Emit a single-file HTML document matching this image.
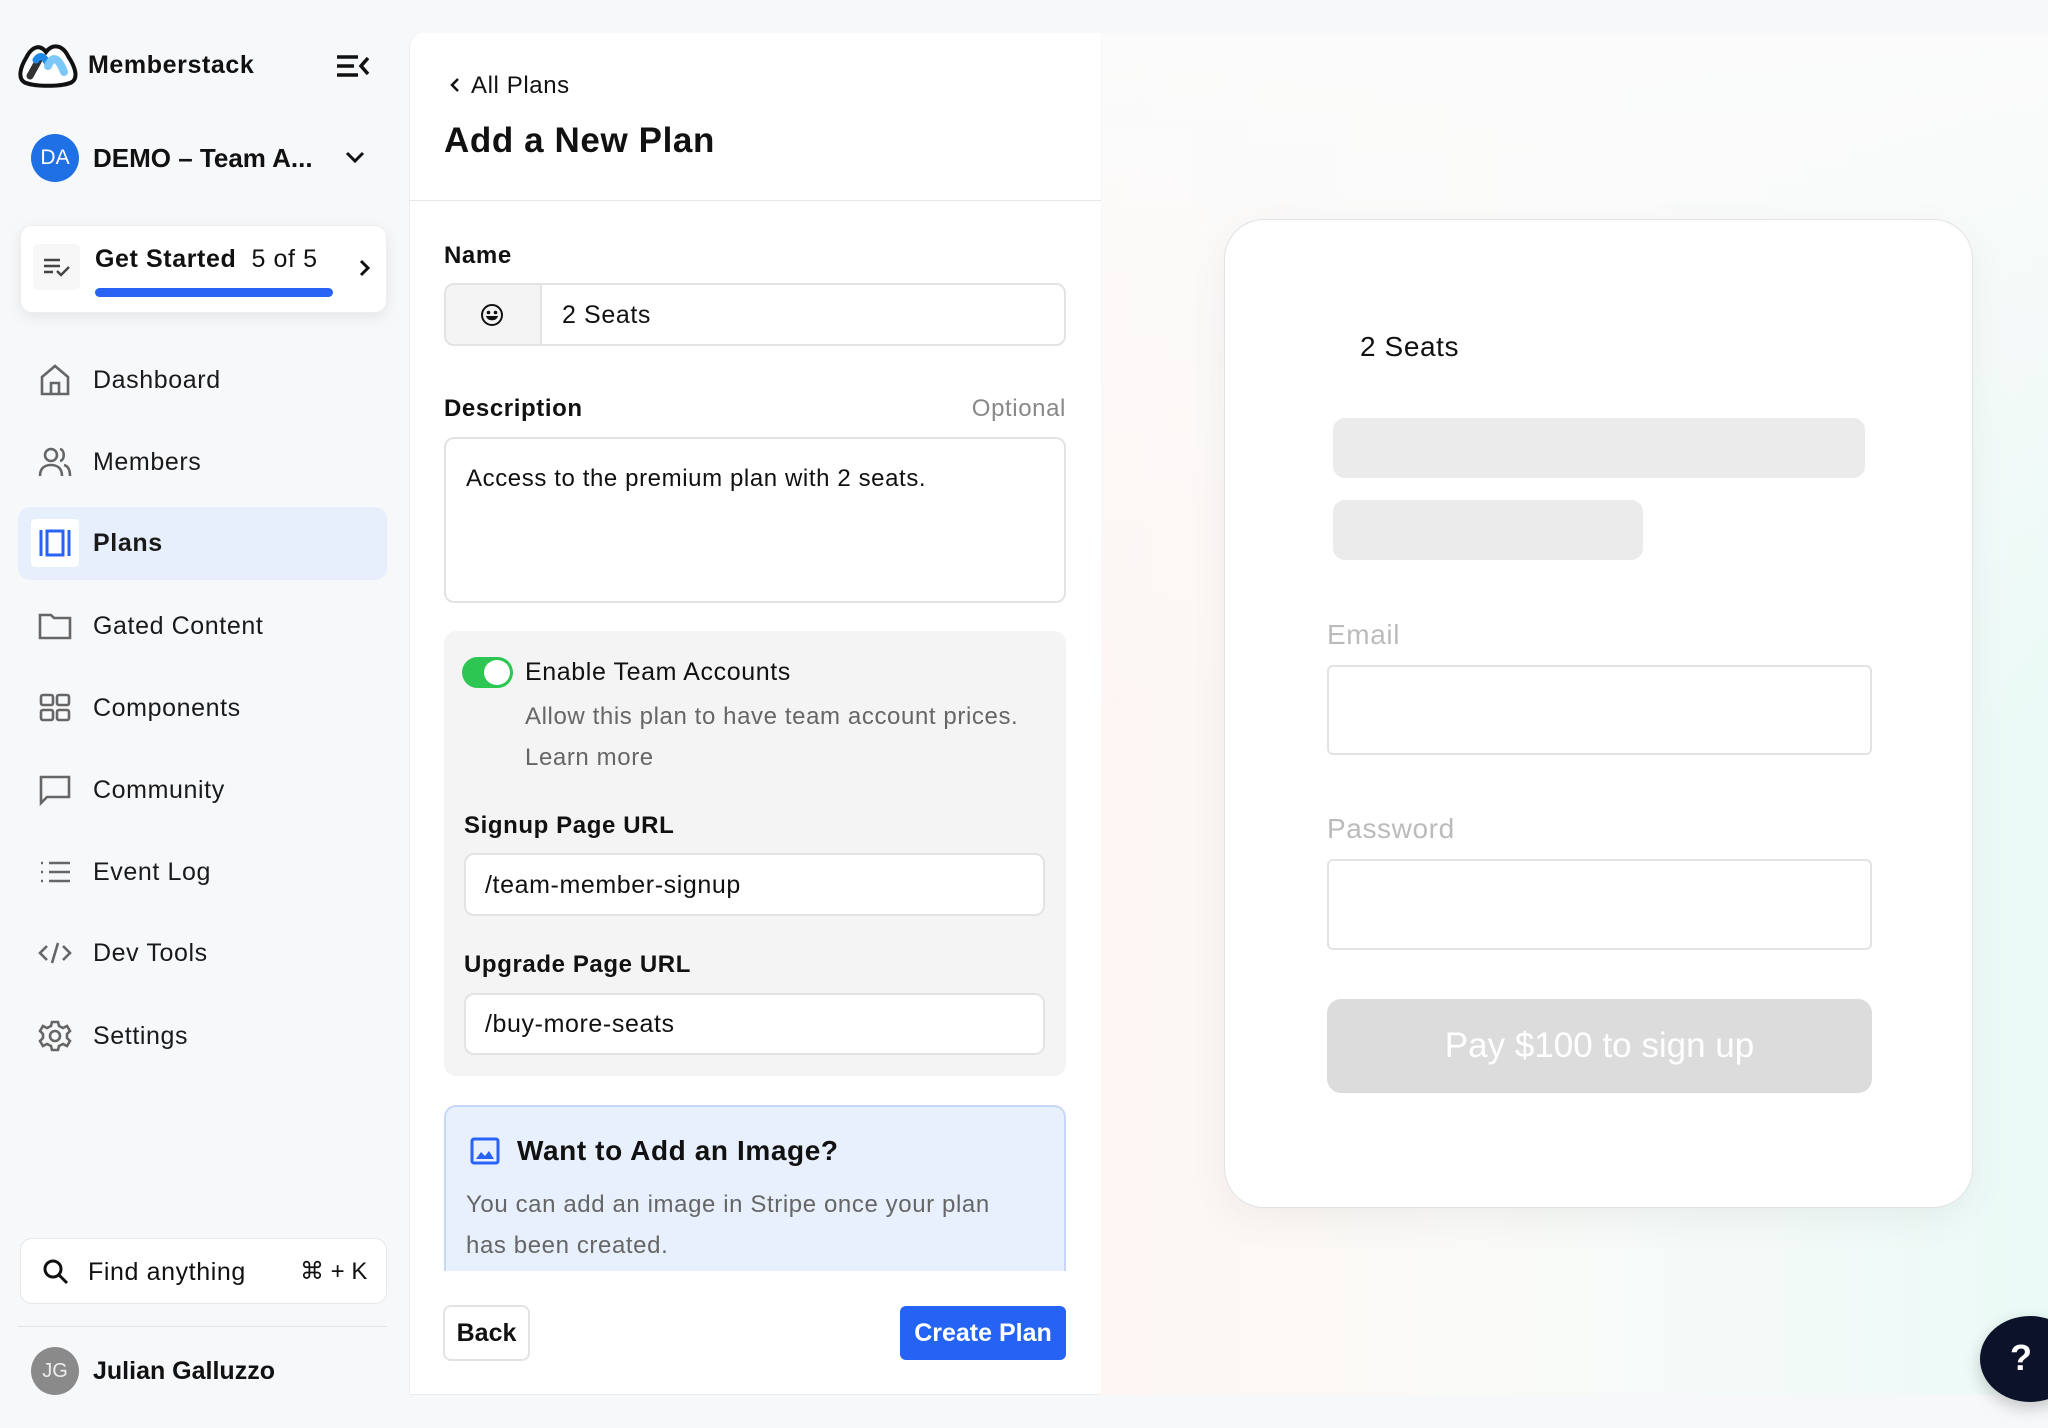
<!DOCTYPE html>
<html><head><meta charset="utf-8"><style>
*{margin:0;padding:0;box-sizing:border-box}
body{width:2048px;height:1428px;overflow:hidden;background:#f7f8fa;font-family:"Liberation Sans",sans-serif;color:#111;position:relative;letter-spacing:0.6px}
.a{position:absolute}
.t{position:absolute;white-space:nowrap;line-height:40px;height:40px}
.nav{font-size:25px;color:#1a1a1a}
.ic{position:absolute;left:37px;width:36px;height:36px}
.lab{font-size:24px;font-weight:bold}
.inp{position:absolute;background:#fff;border:2px solid #e3e3e3;border-radius:10px}
</style></head><body>

<!-- sidebar -->
<svg class="a" style="left:18px;top:42px" width="60" height="46" viewBox="0 0 60 46">
<path d="M6 40 C0 36 2 26 8 16 C14 4 22 2 28 10 C34 2 44 2 50 14 C58 26 60 36 54 40 C46 45 14 45 6 40Z" fill="#fff" stroke="#111" stroke-width="4"/>
<path d="M12 34 L22 16" stroke="#333" stroke-width="7" stroke-linecap="round"/>
<path d="M18 18 C22 12 26 14 30 22" stroke="#1e88e5" stroke-width="7" fill="none" stroke-linecap="round"/>
<path d="M30 24 C34 14 40 14 46 30" stroke="#7cc8f8" stroke-width="8" fill="none" stroke-linecap="round"/>
</svg>
<div class="t" style="left:88px;top:45px;font-size:25px;font-weight:bold">Memberstack</div>
<svg class="a" style="left:336px;top:54px" width="34" height="24" viewBox="0 0 34 24"><path d="M1 3H22M1 12H18M1 21H22M32 4L25 12L32 20" stroke="#111" stroke-width="3.5" fill="none"/></svg>

<div class="a" style="left:31px;top:134px;width:48px;height:48px;border-radius:50%;background:#1f6fe5;color:#fff;font-size:21px;line-height:48px;text-align:center;letter-spacing:0">DA</div>
<div class="t" style="left:93px;top:138px;font-size:26px;font-weight:bold;letter-spacing:0">DEMO – Team A...</div>
<svg class="a" style="left:345px;top:150px" width="20" height="14" viewBox="0 0 20 14"><path d="M2 3L10 11L18 3" stroke="#111" stroke-width="3" fill="none"/></svg>

<div class="a" style="left:20px;top:225px;width:367px;height:88px;background:#fff;border-radius:12px;box-shadow:0 4px 14px rgba(0,0,0,.08);border:1px solid #eee"></div>
<div class="a" style="left:33px;top:244px;width:47px;height:46px;background:#f7f7f7;border-radius:6px"></div>
<svg class="a" style="left:43px;top:257px" width="30" height="20" viewBox="0 0 30 20"><path d="M1 3H17M1 9H17M1 15H10M14 14L18 18L26 10" stroke="#444" stroke-width="2.4" fill="none"/></svg>
<div class="t" style="left:95px;top:239px;font-size:25px"><b>Get Started</b>&nbsp; 5 of 5</div>
<div class="a" style="left:95px;top:288px;width:238px;height:9px;border-radius:5px;background:#2963f5"></div>
<svg class="a" style="left:358px;top:258px" width="14" height="20" viewBox="0 0 14 20"><path d="M3 3L10 10L3 17" stroke="#111" stroke-width="3" fill="none"/></svg>

<div class="a" style="left:18px;top:507px;width:369px;height:73px;background:#e7effd;border-radius:12px"></div>
<div class="a" style="left:31px;top:519px;width:48px;height:48px;background:#fff;border-radius:4px"></div>
<svg class="a" style="left:38px;top:529px" width="34" height="28" viewBox="0 0 34 28"><path d="M3 1V27M31 1V27" stroke="#2963f5" stroke-width="3"/><rect x="9" y="2" width="16" height="24" fill="none" stroke="#2963f5" stroke-width="3"/></svg>

<svg class="ic" style="top:362px" viewBox="0 0 36 36" fill="none" stroke="#666" stroke-width="2.6"><path d="M5 15L18 4L31 15V32H5Z M14 32V21H22V32"/></svg>
<div class="t nav" style="left:93px;top:360px">Dashboard</div>
<svg class="ic" style="top:444px" viewBox="0 0 36 36" fill="none" stroke="#666" stroke-width="2.6"><circle cx="14" cy="11" r="6"/><path d="M3 32C3 24 8 21 14 21C20 21 25 24 25 32M23 5C28 6 28 16 23 17M27 21C31 22 33 26 33 32"/></svg>
<div class="t nav" style="left:93px;top:442px">Members</div>
<div class="t nav" style="left:93px;top:523px;font-weight:bold">Plans</div>
<svg class="ic" style="top:608px" viewBox="0 0 36 36" fill="none" stroke="#666" stroke-width="2.6"><path d="M3 7H14L17 10H33V30H3Z"/></svg>
<div class="t nav" style="left:93px;top:606px">Gated Content</div>
<svg class="ic" style="top:690px" viewBox="0 0 36 36" fill="none" stroke="#666" stroke-width="2.6"><rect x="4" y="5" width="12" height="10" rx="2"/><rect x="20" y="5" width="12" height="10" rx="2"/><rect x="4" y="20" width="12" height="10" rx="2"/><rect x="20" y="20" width="12" height="10" rx="2"/></svg>
<div class="t nav" style="left:93px;top:688px">Components</div>
<svg class="ic" style="top:772px" viewBox="0 0 36 36" fill="none" stroke="#666" stroke-width="2.6"><path d="M4 5H32V25H10L4 31Z"/></svg>
<div class="t nav" style="left:93px;top:770px">Community</div>
<svg class="ic" style="top:854px" viewBox="0 0 36 36" fill="none" stroke="#666" stroke-width="2.6"><path d="M4 9H6M4 18H6M4 27H6M12 9H33M12 18H33M12 27H33"/></svg>
<div class="t nav" style="left:93px;top:852px">Event Log</div>
<svg class="ic" style="top:935px" viewBox="0 0 36 36" fill="none" stroke="#666" stroke-width="2.6"><path d="M10 11L3 18L10 25M26 11L33 18L26 25M21 8L15 28"/></svg>
<div class="t nav" style="left:93px;top:933px">Dev Tools</div>
<svg class="ic" style="top:1018px" viewBox="0 0 36 36" fill="none" stroke="#666" stroke-width="2.6"><circle cx="18" cy="18" r="5"/><path d="M15 4H21L22 8L26 10L30 8L33 13L30 16V20L33 23L30 28L26 26L22 28L21 32H15L14 28L10 26L6 28L3 23L6 20V16L3 13L6 8L10 10L14 8Z"/></svg>
<div class="t nav" style="left:93px;top:1016px">Settings</div>

<div class="a" style="left:20px;top:1238px;width:367px;height:66px;background:#fff;border:1px solid #e8e8e8;border-radius:12px"></div>
<svg class="a" style="left:42px;top:1258px" width="28" height="28" viewBox="0 0 28 28" fill="none" stroke="#111" stroke-width="3"><circle cx="11" cy="11" r="8"/><path d="M17 17L25 25"/></svg>
<div class="t" style="left:88px;top:1252px;font-size:25px">Find anything</div>
<div class="t" style="left:300px;top:1252px;font-size:24px;letter-spacing:0">⌘ + K</div>
<div class="a" style="left:18px;top:1326px;width:369px;height:1px;background:#e4e4e4"></div>
<div class="a" style="left:31px;top:1347px;width:48px;height:48px;border-radius:50%;background:#8a8a8a;color:#eee;font-size:20px;line-height:48px;text-align:center;letter-spacing:0">JG</div>
<div class="t" style="left:93px;top:1351px;font-size:25px;font-weight:bold;letter-spacing:0">Julian Galluzzo</div>

<!-- main panel -->
<div class="a" style="left:409px;top:33px;width:692px;height:1362px;background:#fff;border-radius:14px 0 0 0;border-left:1px solid #eee;border-bottom:1px solid #eee"></div>
<svg class="a" style="left:450px;top:77px" width="10" height="16" viewBox="0 0 10 16"><path d="M8 2L2 8L8 14" stroke="#111" stroke-width="2.5" fill="none"/></svg>
<div class="t" style="left:471px;top:66px;font-size:24px">All Plans</div>
<div class="t" style="left:444px;top:119px;font-size:35px;font-weight:bold;height:44px;line-height:44px">Add a New Plan</div>
<div class="a" style="left:409px;top:200px;width:692px;height:1px;background:#e8e8e8"></div>

<div class="t lab" style="left:444px;top:236px">Name</div>
<div class="inp" style="left:444px;top:283px;width:622px;height:63px;overflow:hidden"><div class="a" style="left:0;top:0;width:96px;height:63px;background:#f4f4f4;border-right:2px solid #e3e3e3"></div></div>
<svg class="a" style="left:480px;top:303px" width="24" height="24" viewBox="0 0 24 24" fill="none" stroke="#111" stroke-width="2"><circle cx="12" cy="12" r="10"/><circle cx="8.5" cy="9.5" r=".8" fill="#111"/><circle cx="15.5" cy="9.5" r=".8" fill="#111"/><path d="M7.5 14C9 17 15 17 16.5 14Z" fill="#111"/></svg>
<div class="t" style="left:562px;top:295px;font-size:25px">2 Seats</div>

<div class="t lab" style="left:444px;top:389px">Description</div>
<div class="t" style="left:866px;width:200px;text-align:right;top:389px;font-size:24px;color:#888">Optional</div>
<div class="inp" style="left:444px;top:437px;width:622px;height:166px"></div>
<div class="t" style="left:466px;top:459px;font-size:24px">Access to the premium plan with 2 seats.</div>

<div class="a" style="left:444px;top:631px;width:622px;height:445px;background:#f4f4f4;border-radius:12px"></div>
<div class="a" style="left:462px;top:657px;width:51px;height:31px;border-radius:16px;background:#2dc653"></div>
<div class="a" style="left:484px;top:660px;width:26px;height:25px;border-radius:50%;background:#fff"></div>
<div class="t" style="left:525px;top:652px;font-size:25px">Enable Team Accounts</div>
<div class="t" style="left:525px;top:697px;font-size:24px;color:#666">Allow this plan to have team account prices.</div>
<div class="t" style="left:525px;top:738px;font-size:24px;color:#666">Learn more</div>
<div class="t lab" style="left:464px;top:806px">Signup Page URL</div>
<div class="inp" style="left:464px;top:853px;width:581px;height:63px"></div>
<div class="t" style="left:485px;top:865px;font-size:25px">/team-member-signup</div>
<div class="t lab" style="left:464px;top:945px">Upgrade Page URL</div>
<div class="inp" style="left:464px;top:993px;width:581px;height:62px"></div>
<div class="t" style="left:485px;top:1004px;font-size:25px">/buy-more-seats</div>

<div class="a" style="left:444px;top:1105px;width:622px;height:166px;background:#e8f0fd;border:2px solid #c7d8f6;border-bottom:none;border-radius:12px 12px 0 0"></div>
<svg class="a" style="left:470px;top:1136px" width="30" height="30" viewBox="0 0 30 30" fill="none"><rect x="2" y="3" width="26" height="24" rx="2" stroke="#2963f5" stroke-width="3"/><path d="M6 23L11 16L15 20L19 15L24 23Z" fill="#2963f5"/></svg>
<div class="t" style="left:517px;top:1131px;font-size:28px;font-weight:bold">Want to Add an Image?</div>
<div class="t" style="left:466px;top:1185px;font-size:24px;color:#666">You can add an image in Stripe once your plan</div>
<div class="t" style="left:466px;top:1226px;font-size:24px;color:#666">has been created.</div>

<div class="a" style="left:443px;top:1305px;width:87px;height:56px;border:2px solid #e3e3e3;border-radius:8px;background:#fff;font-size:25px;font-weight:bold;line-height:52px;text-align:center;letter-spacing:0">Back</div>
<div class="a" style="left:900px;top:1306px;width:166px;height:54px;border-radius:6px;background:#2563f5;color:#fff;font-size:25px;font-weight:bold;line-height:54px;text-align:center;letter-spacing:0">Create Plan</div>

<!-- preview -->
<div class="a" style="left:1102px;top:33px;width:946px;height:1362px;background:linear-gradient(90deg,#fdf6f3 0%,#fafaf8 40%,#f1faf8 80%,#eafaf6 100%)"></div>
<div class="a" style="left:1102px;top:33px;width:946px;height:700px;background:linear-gradient(180deg,#fbfbfb 0%,rgba(251,251,251,0) 100%)"></div>
<div class="a" style="left:1224px;top:219px;width:749px;height:989px;background:#fff;border:1px solid #e2e2e2;border-radius:40px;box-shadow:0 12px 40px rgba(0,0,0,.05)"></div>
<div class="t" style="left:1360px;top:327px;font-size:28px">2 Seats</div>
<div class="a" style="left:1333px;top:418px;width:532px;height:60px;background:#ebebeb;border-radius:12px"></div>
<div class="a" style="left:1333px;top:500px;width:310px;height:60px;background:#ebebeb;border-radius:12px"></div>
<div class="t" style="left:1327px;top:615px;font-size:28px;color:#bbb">Email</div>
<div class="inp" style="left:1327px;top:665px;width:545px;height:90px;border-radius:6px"></div>
<div class="t" style="left:1327px;top:809px;font-size:28px;color:#bbb">Password</div>
<div class="inp" style="left:1327px;top:859px;width:545px;height:91px;border-radius:6px"></div>
<div class="a" style="left:1327px;top:999px;width:545px;height:94px;background:#dcdcdc;border-radius:14px;color:#fff;font-size:35px;line-height:94px;text-align:center;letter-spacing:0">Pay $100 to sign up</div>

<div class="a" style="left:1980px;top:1316px;width:100px;height:86px;border-radius:50%;background:#0b1229;box-shadow:0 6px 16px rgba(0,0,0,.2)"></div>
<div class="t" style="left:2010px;top:1338px;font-size:36px;font-weight:bold;color:#fff">?</div>
</body></html>
